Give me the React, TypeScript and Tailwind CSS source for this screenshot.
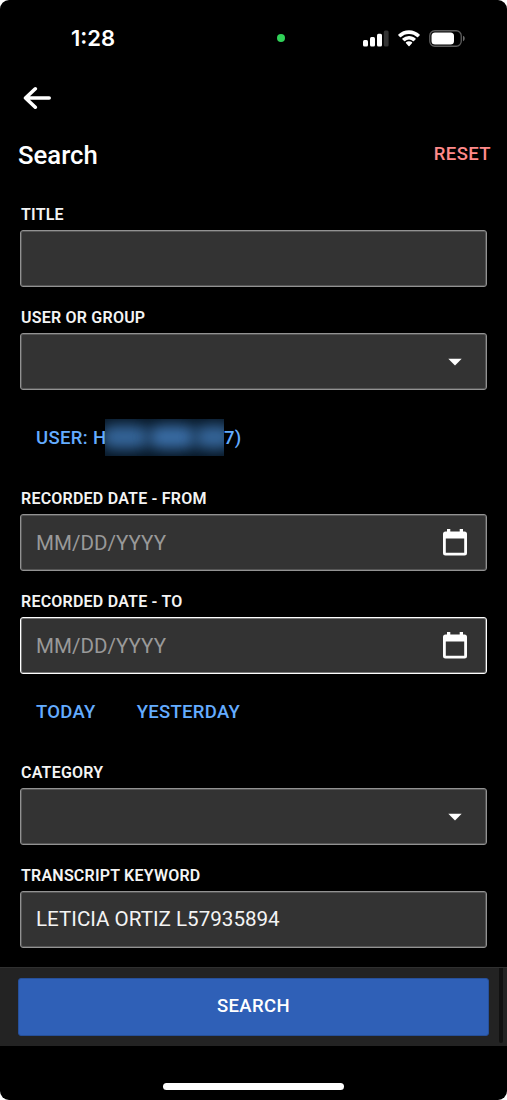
import { ReactNode } from "react";
import clsx from "clsx";

type FieldProps = {
  label: string;
  value?: string;
  placeholder?: string;
  icon?: ReactNode;
  active?: boolean;
};

function Field({ label, value, placeholder, icon, active }: FieldProps) {
  return (
    <div className="flex flex-col gap-1.5">
      <span className="h-5 pl-px text-base leading-[21px] font-semibold tracking-[0.22px] text-[#f4f4f4]">
        {label}
      </span>
      <div
        className={clsx(
          "flex h-[57px] items-center justify-between rounded-[3px] border bg-[#333333] pr-[18px] pl-[15px] text-[20.6px]",
          active
            ? "border-white shadow-[inset_0_0_0_1px_#777777]"
            : "border-[#929292] shadow-[inset_0_0_0_1px_#555555]"
        )}
      >
        <span className={value ? "text-[#f4f4f4]" : "pt-0.5 text-[#999999]"}>
          {value ?? placeholder}
        </span>
        {icon}
      </div>
    </div>
  );
}

function Caret() {
  return (
    <svg width="26" height="26" viewBox="0 0 26 26" fill="white">
      <path d="M6.3 9.7h13.4L13 16.5z" />
    </svg>
  );
}

function CalendarIcon() {
  return (
    <svg className="-mt-0.5" width="26" height="28" viewBox="0 0 26 28" fill="white">
      <path
        fillRule="evenodd"
        d="M5 1h3.3v2.5h9.4V1H21v2.5h1.5a2.5 2.5 0 0 1 2.5 2.5v19a2.5 2.5 0 0 1-2.5 2.5h-19A2.5 2.5 0 0 1 1 25V6a2.5 2.5 0 0 1 2.5-2.5H5zM3.8 10.4v14.3h18.4V10.4z"
      />
    </svg>
  );
}

function StatusBar() {
  return (
    <div className="flex h-[76px] items-center pr-[42px] pl-[71px]">
      <span className="w-[206px] font-['Inter',sans-serif] text-[22px] font-semibold">1:28</span>
      <span className="size-2 rounded-full bg-[#30d158]" />
      <div className="ml-auto flex items-center gap-[9px]">
        <svg width="27" height="17" viewBox="0 0 27 17" fill="white">
          <rect x="1" y="10" width="5" height="6.5" rx="1.5" />
          <rect x="8" y="7" width="5" height="9.5" rx="1.5" />
          <rect x="15" y="3.7" width="5" height="12.8" rx="1.5" />
          <rect x="21.8" y="0.5" width="4.8" height="16" rx="1.5" fill="#333333" />
        </svg>
        <svg width="22" height="17" viewBox="0 0 22 17" fill="white">
          <path d="M11 0.3c4.1 0 7.9 1.6 10.7 4.3l.1.6-2 2-.5.05A12 12 0 0 0 11 3.9 12 12 0 0 0 2.7 7.25l-.5-.05-2-2 .1-.6A15.5 15.5 0 0 1 11 .3z" />
          <path d="M11 5.9c2.6 0 4.95 1 6.7 2.6v.65l-2 2h-.6A6.3 6.3 0 0 0 11 9.5a6.3 6.3 0 0 0-4.1 1.65h-.6l-2-2V8.5A9.8 9.8 0 0 1 11 5.9z" />
          <path d="M11 11.2c1.2 0 2.3.4 3.15 1.15v.6L11.3 16.2h-.6L7.85 12.95v-.6A4.7 4.7 0 0 1 11 11.2z" />
        </svg>
        <svg width="36" height="17" viewBox="0 0 36 17">
          <rect x="0.75" y="0.75" width="31.5" height="15.5" rx="5" fill="none" stroke="#5c5c5c" strokeWidth="1.3" />
          <rect x="2.5" y="2.5" width="22.5" height="12" rx="3.5" fill="white" />
          <path d="M34 5.8c1.2.5 1.7 1.5 1.7 2.7s-.5 2.2-1.7 2.7z" fill="#6b6b6b" />
        </svg>
      </div>
    </div>
  );
}

export default function App() {
  return (
    <div className="h-[1100px] w-[507px] overflow-hidden bg-white">
      <div className="flex h-full flex-col rounded-[9px] bg-black font-['Roboto',sans-serif] text-white">
        <StatusBar />
        <div className="flex h-11 items-center pl-[23px]">
          <svg
            width="29"
            height="24"
            viewBox="0 0 29 24"
            fill="none"
            stroke="white"
            strokeWidth="3.6"
            strokeLinecap="round"
            strokeLinejoin="round"
          >
            <path d="M12.3 2.8 2.5 12l9.8 9.2M2.5 12h23.7" />
          </svg>
        </div>
        <div className="flex h-[68px] items-center justify-between pt-0.5 pr-4 pl-[18px]">
          <h1 className="text-[25.7px] font-medium">Search</h1>
          <button className="text-[18.5px] font-medium tracking-[0.4px] text-[#ff8a8a]">RESET</button>
        </div>

        <main className="flex h-[779px] flex-col gap-5 pt-4 pr-5 pl-5">
          <Field label="TITLE" />
          <Field label="USER OR GROUP" icon={<Caret />} />
          <div className="flex h-[58px] shrink-0 items-start pt-[9px] pl-4 text-[18.5px] font-medium tracking-[0.35px] text-[#64acff]">
            <span className="w-[69px] leading-[39px] whitespace-nowrap">USER: H</span>
            <span className="relative h-[37px] w-[119px] overflow-hidden bg-[#071624]">
              <span className="absolute top-1.5 -left-1 h-6 w-12 rounded-full bg-[#356599] blur-[7px]" />
              <span className="absolute top-1.5 left-[43px] h-6 w-12 rounded-full bg-[#3a6da5] blur-[7px]" />
              <span className="absolute top-1.5 left-[89px] h-6 w-10 rounded-full bg-[#356599] blur-[7px]" />
            </span>
            <span className="leading-[39px]">7)</span>
          </div>
          <Field label="RECORDED DATE - FROM" placeholder="MM/DD/YYYY" icon={<CalendarIcon />} />
          <Field label="RECORDED DATE - TO" placeholder="MM/DD/YYYY" icon={<CalendarIcon />} active />
          <div className="flex h-12 shrink-0 items-start gap-[41px] pt-[5px] pl-4 text-[18.5px] font-medium tracking-[0.3px] text-[#64acff]">
            <button>TODAY</button>
            <button>YESTERDAY</button>
          </div>
          <Field label="CATEGORY" icon={<Caret />} />
          <Field label="TRANSCRIPT KEYWORD" value="LETICIA ORTIZ L57935894" />
        </main>

        <footer className="relative h-[79px] shrink-0 border-t border-[#303030] bg-[#232323] pt-2.5 pr-[18px] pl-[18px]">
          <button className="h-[58px] w-full rounded-[3px] border border-[#26509a] bg-[#2f60b7] text-[18.5px] font-medium tracking-[0.4px]">
            SEARCH
          </button>
          <span className="absolute top-0 right-1 h-[75px] w-1 rounded-b-full bg-[#111111]" />
        </footer>
        <div className="mx-auto mt-[37px] h-[7px] w-[181px] rounded-full bg-white" />
      </div>
    </div>
  );
}
